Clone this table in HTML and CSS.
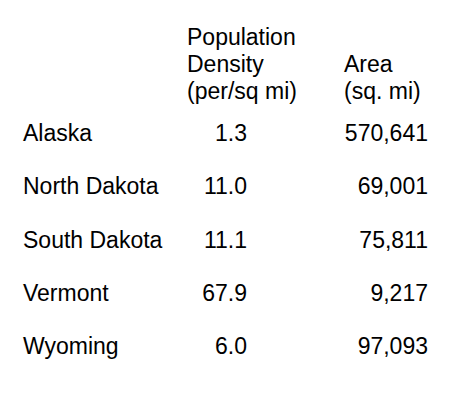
FILE: index.html
```html
<!DOCTYPE html>
<html lang="en">
  <head>
    <meta charset="UTF-8" />
    <meta name="viewport" content="width=device-width, initial-scale=1.0" />
    <title>Population density</title>
    <link rel="stylesheet" href="styles.css">
  </head>
  <body>
    <div class="density-table">
      <div class="table-head">
        <div class="cell-state"></div>
        <div class="cell-head">Population<br />Density<br />(per/sq mi)</div>
        <div class="cell-head">Area<br />(sq. mi)</div>
      </div>
      <div class="table-body">
        <div class="cell-state">Alaska</div>
        <div class="cell-density">1.3</div>
        <div class="cell-area">570,641</div>

        <div class="cell-state">North Dakota</div>
        <div class="cell-density">11.0</div>
        <div class="cell-area">69,001</div>

        <div class="cell-state">South Dakota</div>
        <div class="cell-density">11.1</div>
        <div class="cell-area">75,811</div>

        <div class="cell-state">Vermont</div>
        <div class="cell-density">67.9</div>
        <div class="cell-area">9,217</div>

        <div class="cell-state">Wyoming</div>
        <div class="cell-density">6.0</div>
        <div class="cell-area">97,093</div>
      </div>
    </div>
  </body>
</html>
```

FILE: styles.css
```css
body {
  margin: 0;
  background-color: #ffffff;
  font-family: 'Liberation Sans', Arial, sans-serif;
  color: #000000;
}

.density-table {
  padding: 24px 0 0 23px;
  font-size: 23px;
  line-height: 26px;
}

.table-head,
.table-body {
  display: grid;
  grid-template-columns: 164px 157px 84px;
}

.table-head {
  line-height: 27px;
  margin-bottom: 15px;
}

.table-body {
  row-gap: 27.25px;
}

.cell-head {
  white-space: nowrap;
  align-self: end;
}

.cell-density {
  width: 60px;
  text-align: right;
}

.cell-area {
  text-align: right;
}
```
